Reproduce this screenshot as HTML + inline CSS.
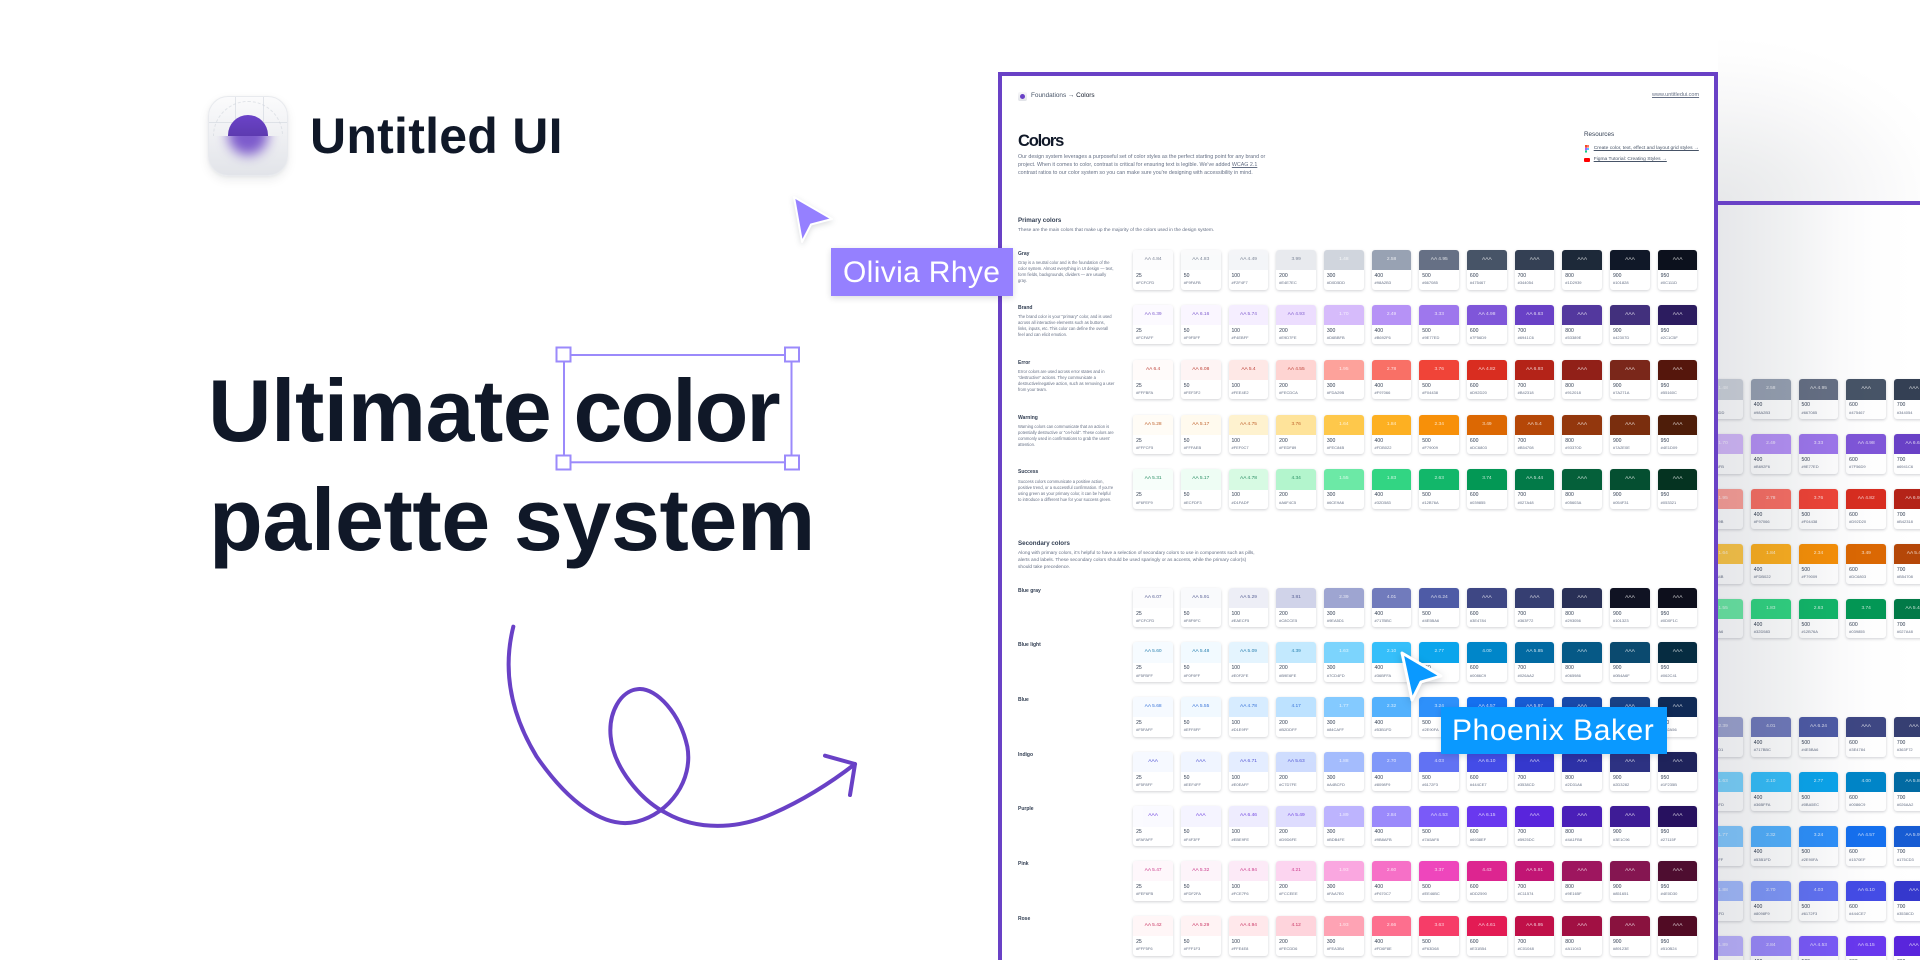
<!DOCTYPE html>
<html lang="en"><head><meta charset="utf-8"><title>Untitled UI – Ultimate color palette system</title>
<style>
html,body{margin:0;padding:0;background:#fff}
body{position:relative;width:1920px;height:960px;overflow:hidden;font-family:"Liberation Sans",sans-serif;color:#101828}
.a{position:absolute;white-space:nowrap;line-height:1}
#p{position:absolute;left:0;top:0;width:1920px;height:960px;filter:blur(.3px)}
.r{position:absolute;display:flex;gap:8.1px}
.r p{position:relative;flex:none;margin:0;width:39.6px;height:39.6px;border-radius:3px;background:#fff;box-shadow:0 1px 3px rgba(16,24,40,.14),0 1px 2px rgba(16,24,40,.06);overflow:hidden}
.r b{display:block;height:20.3px;line-height:20.3px;text-align:center;font-size:4.85px;font-weight:400;color:rgba(255,255,255,.78)}
.r b.l{color:inherit;opacity:.85}
.r u{position:absolute;left:2.8px;top:24.2px;font-size:5.1px;line-height:5px;color:#344054;text-decoration:none}
.r s{position:absolute;left:2.8px;top:31.4px;font-size:4px;line-height:4px;color:#667085;text-decoration:none}
.d{font-size:4.15px;line-height:6px;color:#667085}
.h{font-size:5px;font-weight:700;color:#344054}
.t{color:#344054;font-size:6.2px;font-weight:700}
</style></head><body>

<!-- right-hand background panels -->
<div style="position:absolute;left:1718px;top:30px;width:202px;height:171px;background:radial-gradient(ellipse 240px 165px at 0 100%,#e7e8ea 0%,#eeeff0 30%,#f7f7f8 60%,#fdfdfd 85%,#fff 100%)"></div>
<div id="b" style="position:absolute;left:1718px;top:205px;width:202px;height:755px;overflow:hidden;background:#fff;filter:blur(.3px)">
<div class="r" style="left:-14.7px;top:174.3px"><p><b style="background:#D0D5DD">1.48</b><u>300</u><s>#D0D5DD</s></p><p><b style="background:#98A2B3">2.58</b><u>400</u><s>#98A2B3</s></p><p><b style="background:#667085">AA 4.95</b><u>500</u><s>#667085</s></p><p><b style="background:#475467">AAA</b><u>600</u><s>#475467</s></p><p><b style="background:#344054">AAA</b><u>700</u><s>#344054</s></p></div>
<div class="r" style="left:-14.7px;top:229.1px"><p><b style="background:#D6BBFB">1.70</b><u>300</u><s>#D6BBFB</s></p><p><b style="background:#B692F6">2.49</b><u>400</u><s>#B692F6</s></p><p><b style="background:#9E77ED">3.33</b><u>500</u><s>#9E77ED</s></p><p><b style="background:#7F56D9">AA 4.98</b><u>600</u><s>#7F56D9</s></p><p><b style="background:#6941C6">AA 6.63</b><u>700</u><s>#6941C6</s></p></div>
<div class="r" style="left:-14.7px;top:284px"><p><b style="background:#FDA29B">1.95</b><u>300</u><s>#FDA29B</s></p><p><b style="background:#F97066">2.78</b><u>400</u><s>#F97066</s></p><p><b style="background:#F04438">3.76</b><u>500</u><s>#F04438</s></p><p><b style="background:#D92D20">AA 4.82</b><u>600</u><s>#D92D20</s></p><p><b style="background:#B42318">AA 6.93</b><u>700</u><s>#B42318</s></p></div>
<div class="r" style="left:-14.7px;top:339px"><p><b style="background:#FEC84B">1.64</b><u>300</u><s>#FEC84B</s></p><p><b style="background:#FDB022">1.84</b><u>400</u><s>#FDB022</s></p><p><b style="background:#F79009">2.34</b><u>500</u><s>#F79009</s></p><p><b style="background:#DC6803">3.49</b><u>600</u><s>#DC6803</s></p><p><b style="background:#B54708">AA 5.4</b><u>700</u><s>#B54708</s></p></div>
<div class="r" style="left:-14.7px;top:393.9px"><p><b style="background:#6CE9A6">1.55</b><u>300</u><s>#6CE9A6</s></p><p><b style="background:#32D583">1.83</b><u>400</u><s>#32D583</s></p><p><b style="background:#12B76A">2.63</b><u>500</u><s>#12B76A</s></p><p><b style="background:#039855">3.74</b><u>600</u><s>#039855</s></p><p><b style="background:#027A48">AA 5.44</b><u>700</u><s>#027A48</s></p></div>
<div class="r" style="left:-14.7px;top:512px"><p><b style="background:#9EA5D1">2.39</b><u>300</u><s>#9EA5D1</s></p><p><b style="background:#717BBC">4.01</b><u>400</u><s>#717BBC</s></p><p><b style="background:#4E5BA6">AA 6.24</b><u>500</u><s>#4E5BA6</s></p><p><b style="background:#3E4784">AAA</b><u>600</u><s>#3E4784</s></p><p><b style="background:#363F72">AAA</b><u>700</u><s>#363F72</s></p></div>
<div class="r" style="left:-14.7px;top:566.6px"><p><b style="background:#7CD4FD">1.63</b><u>300</u><s>#7CD4FD</s></p><p><b style="background:#36BFFA">2.10</b><u>400</u><s>#36BFFA</s></p><p><b style="background:#0BA5EC">2.77</b><u>500</u><s>#0BA5EC</s></p><p><b style="background:#0086C9">4.00</b><u>600</u><s>#0086C9</s></p><p><b style="background:#026AA2">AA 5.85</b><u>700</u><s>#026AA2</s></p></div>
<div class="r" style="left:-14.7px;top:621.3px"><p><b style="background:#84CAFF">1.77</b><u>300</u><s>#84CAFF</s></p><p><b style="background:#53B1FD">2.32</b><u>400</u><s>#53B1FD</s></p><p><b style="background:#2E90FA">3.24</b><u>500</u><s>#2E90FA</s></p><p><b style="background:#1570EF">AA 4.57</b><u>600</u><s>#1570EF</s></p><p><b style="background:#175CD3">AA 5.97</b><u>700</u><s>#175CD3</s></p></div>
<div class="r" style="left:-14.7px;top:676px"><p><b style="background:#A4BCFD">1.88</b><u>300</u><s>#A4BCFD</s></p><p><b style="background:#8098F9">2.70</b><u>400</u><s>#8098F9</s></p><p><b style="background:#6172F3">4.03</b><u>500</u><s>#6172F3</s></p><p><b style="background:#444CE7">AA 6.10</b><u>600</u><s>#444CE7</s></p><p><b style="background:#3538CD">AAA</b><u>700</u><s>#3538CD</s></p></div>
<div class="r" style="left:-14.7px;top:730.6px"><p><b style="background:#BDB4FE">1.89</b><u>300</u><s>#BDB4FE</s></p><p><b style="background:#9B8AFB">2.84</b><u>400</u><s>#9B8AFB</s></p><p><b style="background:#7A5AF8">AA 4.53</b><u>500</u><s>#7A5AF8</s></p><p><b style="background:#6938EF">AA 6.15</b><u>600</u><s>#6938EF</s></p><p><b style="background:#5925DC">AAA</b><u>700</u><s>#5925DC</s></p></div>
<div style="position:absolute;inset:0;mix-blend-mode:multiply;background:linear-gradient(90deg,#e6e7ea 0%,#ebecee 18%,#f1f2f3 38%,#f9f9fa 58%,#fefefe 78%,#fff 100%)"></div>
</div>

<!-- page inside the frame -->
<div id="p">
<div style="position:absolute;left:1018px;top:91.5px;width:9px;height:9px;border-radius:2px;background:linear-gradient(#f7f7f9,#e1e3e8)"></div>
<div style="position:absolute;left:1020px;top:93.5px;width:5px;height:5px;border-radius:50%;background:#6941C6"></div>
<div class="a" style="left:1031px;top:92.5px;font-size:6.4px;color:#344054"><span style="color:#475467">Foundations</span> → <span style="color:#101828">Colors</span></div>
<div class="a" style="left:1652px;top:93px;font-size:5.5px;color:#667085;text-decoration:underline">www.untitledui.com</div>

<div class="a" style="left:1018px;top:132.5px;font-size:16.5px;font-weight:700;letter-spacing:-1.2px;color:#101828">Colors</div>
<div class="a" style="left:1018px;top:155.3px;font-size:5.34px;color:#667085">Our design system leverages a purposeful set of color styles as the perfect starting point for any brand or</div>
<div class="a" style="left:1018px;top:163px;font-size:5.34px;color:#667085">project. When it comes to color, contrast is critical for ensuring text is legible. We've added <span style="text-decoration:underline">WCAG 2.1</span></div>
<div class="a" style="left:1018px;top:170.6px;font-size:5.34px;color:#667085">contrast ratios to our color system so you can make sure you're designing with accessibility in mind.</div>

<div class="a" style="left:1584px;top:132.4px;font-size:6.3px;color:#344054">Resources</div>
<svg style="position:absolute;left:1584px;top:145px" width="6" height="8" viewBox="0 0 6 8"><rect x="1" width="2" height="2.6" fill="#F24E1E"/><rect x="3" width="2" height="2.6" fill="#FF7262"/><rect x="1" y="2.7" width="2" height="2.6" fill="#A259FF"/><circle cx="4" cy="4" r="1" fill="#1ABCFE"/><rect x="1" y="5.3" width="2" height="2.4" rx="1" fill="#0ACF83"/></svg>
<div style="position:absolute;left:1583.5px;top:158px;width:6.5px;height:4.4px;border-radius:1px;background:#f00"></div>
<div class="a" style="left:1593.7px;top:146.6px;font-size:4.9px;color:#475467;text-decoration:underline">Create color, text, effect and layout grid styles →</div>
<div class="a" style="left:1593.7px;top:157.6px;font-size:4.9px;color:#475467;text-decoration:underline">Figma Tutorial: Creating Styles →</div>

<div class="a t" style="left:1018px;top:217.6px">Primary colors</div>
<div class="a" style="left:1018px;top:228.6px;font-size:4.8px;color:#667085">These are the main colors that make up the majority of the colors used in the design system.</div>

<!-- Gray -->
<div class="a h" style="left:1018px;top:251.5px">Gray</div>
<div class="a d" style="left:1018px;top:259.7px">Gray is a neutral color and is the foundation of the<br>color system. Almost everything in UI design — text,<br>form fields, backgrounds, dividers — are usually<br>gray.</div>
<div class="r" style="left:1133.3px;top:250px;color:#667085"><p><b class="l" style="background:#FCFCFD">AA 4.84</b><u>25</u><s>#FCFCFD</s></p><p><b class="l" style="background:#F9FAFB">AA 4.83</b><u>50</u><s>#F9FAFB</s></p><p><b class="l" style="background:#F2F4F7">AA 4.49</b><u>100</u><s>#F2F4F7</s></p><p><b class="l" style="background:#E4E7EC">3.99</b><u>200</u><s>#E4E7EC</s></p><p><b style="background:#D0D5DD">1.48</b><u>300</u><s>#D0D5DD</s></p><p><b style="background:#98A2B3">2.58</b><u>400</u><s>#98A2B3</s></p><p><b style="background:#667085">AA 4.95</b><u>500</u><s>#667085</s></p><p><b style="background:#475467">AAA</b><u>600</u><s>#475467</s></p><p><b style="background:#344054">AAA</b><u>700</u><s>#344054</s></p><p><b style="background:#1D2939">AAA</b><u>800</u><s>#1D2939</s></p><p><b style="background:#101828">AAA</b><u>900</u><s>#101828</s></p><p><b style="background:#0C111D">AAA</b><u>950</u><s>#0C111D</s></p></div>

<!-- Brand -->
<div class="a h" style="left:1018px;top:306.2px">Brand</div>
<div class="a d" style="left:1018px;top:314.4px">The brand color is your "primary" color, and is used<br>across all interactive elements such as buttons,<br>links, inputs, etc. This color can define the overall<br>feel and can elicit emotion.</div>
<div class="r" style="left:1133.3px;top:304.8px;color:#6941C6"><p><b class="l" style="background:#FCFAFF">AA 6.39</b><u>25</u><s>#FCFAFF</s></p><p><b class="l" style="background:#F9F5FF">AA 6.16</b><u>50</u><s>#F9F5FF</s></p><p><b class="l" style="background:#F4EBFF">AA 5.74</b><u>100</u><s>#F4EBFF</s></p><p><b class="l" style="background:#E9D7FE">AA 4.93</b><u>200</u><s>#E9D7FE</s></p><p><b style="background:#D6BBFB">1.70</b><u>300</u><s>#D6BBFB</s></p><p><b style="background:#B692F6">2.49</b><u>400</u><s>#B692F6</s></p><p><b style="background:#9E77ED">3.33</b><u>500</u><s>#9E77ED</s></p><p><b style="background:#7F56D9">AA 4.98</b><u>600</u><s>#7F56D9</s></p><p><b style="background:#6941C6">AA 6.63</b><u>700</u><s>#6941C6</s></p><p><b style="background:#53389E">AAA</b><u>800</u><s>#53389E</s></p><p><b style="background:#42307D">AAA</b><u>900</u><s>#42307D</s></p><p><b style="background:#2C1C5F">AAA</b><u>950</u><s>#2C1C5F</s></p></div>

<!-- Error -->
<div class="a h" style="left:1018px;top:361px">Error</div>
<div class="a d" style="left:1018px;top:369.2px">Error colors are used across error states and in<br>"destructive" actions. They communicate a<br>destructive/negative action, such as removing a user<br>from your team.</div>
<div class="r" style="left:1133.3px;top:359.8px;color:#B42318"><p><b class="l" style="background:#FFFBFA">AA 6.4</b><u>25</u><s>#FFFBFA</s></p><p><b class="l" style="background:#FEF3F2">AA 6.08</b><u>50</u><s>#FEF3F2</s></p><p><b class="l" style="background:#FEE4E2">AA 5.4</b><u>100</u><s>#FEE4E2</s></p><p><b class="l" style="background:#FECDCA">AA 4.55</b><u>200</u><s>#FECDCA</s></p><p><b style="background:#FDA29B">1.95</b><u>300</u><s>#FDA29B</s></p><p><b style="background:#F97066">2.78</b><u>400</u><s>#F97066</s></p><p><b style="background:#F04438">3.76</b><u>500</u><s>#F04438</s></p><p><b style="background:#D92D20">AA 4.82</b><u>600</u><s>#D92D20</s></p><p><b style="background:#B42318">AA 6.93</b><u>700</u><s>#B42318</s></p><p><b style="background:#912018">AAA</b><u>800</u><s>#912018</s></p><p><b style="background:#7A271A">AAA</b><u>900</u><s>#7A271A</s></p><p><b style="background:#55160C">AAA</b><u>950</u><s>#55160C</s></p></div>

<!-- Warning -->
<div class="a h" style="left:1018px;top:415.6px">Warning</div>
<div class="a d" style="left:1018px;top:423.8px">Warning colors can communicate that an action is<br>potentially destructive or "on-hold". These colors are<br>commonly used in confirmations to grab the users'<br>attention.</div>
<div class="r" style="left:1133.3px;top:414.5px;color:#B54708"><p><b class="l" style="background:#FFFCF5">AA 5.28</b><u>25</u><s>#FFFCF5</s></p><p><b class="l" style="background:#FFFAEB">AA 5.17</b><u>50</u><s>#FFFAEB</s></p><p><b class="l" style="background:#FEF0C7">AA 4.75</b><u>100</u><s>#FEF0C7</s></p><p><b class="l" style="background:#FEDF89">3.76</b><u>200</u><s>#FEDF89</s></p><p><b style="background:#FEC84B">1.64</b><u>300</u><s>#FEC84B</s></p><p><b style="background:#FDB022">1.84</b><u>400</u><s>#FDB022</s></p><p><b style="background:#F79009">2.34</b><u>500</u><s>#F79009</s></p><p><b style="background:#DC6803">3.49</b><u>600</u><s>#DC6803</s></p><p><b style="background:#B54708">AA 5.4</b><u>700</u><s>#B54708</s></p><p><b style="background:#93370D">AAA</b><u>800</u><s>#93370D</s></p><p><b style="background:#7A2E0E">AAA</b><u>900</u><s>#7A2E0E</s></p><p><b style="background:#4E1D09">AAA</b><u>950</u><s>#4E1D09</s></p></div>

<!-- Success -->
<div class="a h" style="left:1018px;top:470.4px">Success</div>
<div class="a d" style="left:1018px;top:478.6px">Success colors communicate a positive action,<br>positive trend, or a successful confirmation. If you're<br>using green as your primary color, it can be helpful<br>to introduce a different hue for your success green.</div>
<div class="r" style="left:1133.3px;top:469.3px;color:#027A48"><p><b class="l" style="background:#F6FEF9">AA 5.31</b><u>25</u><s>#F6FEF9</s></p><p><b class="l" style="background:#ECFDF3">AA 5.17</b><u>50</u><s>#ECFDF3</s></p><p><b class="l" style="background:#D1FADF">AA 4.78</b><u>100</u><s>#D1FADF</s></p><p><b class="l" style="background:#A6F4C5">4.34</b><u>200</u><s>#A6F4C5</s></p><p><b style="background:#6CE9A6">1.55</b><u>300</u><s>#6CE9A6</s></p><p><b style="background:#32D583">1.83</b><u>400</u><s>#32D583</s></p><p><b style="background:#12B76A">2.63</b><u>500</u><s>#12B76A</s></p><p><b style="background:#039855">3.74</b><u>600</u><s>#039855</s></p><p><b style="background:#027A48">AA 5.44</b><u>700</u><s>#027A48</s></p><p><b style="background:#05603A">AAA</b><u>800</u><s>#05603A</s></p><p><b style="background:#054F31">AAA</b><u>900</u><s>#054F31</s></p><p><b style="background:#053321">AAA</b><u>950</u><s>#053321</s></p></div>

<!-- Secondary -->
<div class="a t" style="left:1018px;top:541.2px">Secondary colors</div>
<div class="a" style="left:1018px;top:552.2px;font-size:4.79px;color:#667085">Along with primary colors, it's helpful to have a selection of secondary colors to use in components such as pills,</div>
<div class="a" style="left:1018px;top:559.2px;font-size:4.79px;color:#667085">alerts and labels. These secondary colors should be used sparingly or as accents, while the primary color(s)</div>
<div class="a" style="left:1018px;top:565.9px;font-size:4.79px;color:#667085">should take precedence.</div>

<div class="a h" style="left:1018px;top:588.5px">Blue gray</div>
<div class="r" style="left:1133.3px;top:587.7px;color:#3E4784"><p><b class="l" style="background:#FCFCFD">AA 6.07</b><u>25</u><s>#FCFCFD</s></p><p><b class="l" style="background:#F8F9FC">AA 5.91</b><u>50</u><s>#F8F9FC</s></p><p><b class="l" style="background:#EAECF5">AA 5.29</b><u>100</u><s>#EAECF5</s></p><p><b class="l" style="background:#C8CCE5">3.81</b><u>200</u><s>#C8CCE5</s></p><p><b style="background:#9EA5D1">2.39</b><u>300</u><s>#9EA5D1</s></p><p><b style="background:#717BBC">4.01</b><u>400</u><s>#717BBC</s></p><p><b style="background:#4E5BA6">AA 6.24</b><u>500</u><s>#4E5BA6</s></p><p><b style="background:#3E4784">AAA</b><u>600</u><s>#3E4784</s></p><p><b style="background:#363F72">AAA</b><u>700</u><s>#363F72</s></p><p><b style="background:#293056">AAA</b><u>800</u><s>#293056</s></p><p><b style="background:#101323">AAA</b><u>900</u><s>#101323</s></p><p><b style="background:#0D0F1C">AAA</b><u>950</u><s>#0D0F1C</s></p></div>

<div class="a h" style="left:1018px;top:643.3px">Blue light</div>
<div class="r" style="left:1133.3px;top:642.3px;color:#026AA2"><p><b class="l" style="background:#F5FBFF">AA 5.60</b><u>25</u><s>#F5FBFF</s></p><p><b class="l" style="background:#F0F9FF">AA 5.48</b><u>50</u><s>#F0F9FF</s></p><p><b class="l" style="background:#E0F2FE">AA 5.09</b><u>100</u><s>#E0F2FE</s></p><p><b class="l" style="background:#B9E6FE">4.39</b><u>200</u><s>#B9E6FE</s></p><p><b style="background:#7CD4FD">1.63</b><u>300</u><s>#7CD4FD</s></p><p><b style="background:#36BFFA">2.10</b><u>400</u><s>#36BFFA</s></p><p><b style="background:#0BA5EC">2.77</b><u>500</u><s>#0BA5EC</s></p><p><b style="background:#0086C9">4.00</b><u>600</u><s>#0086C9</s></p><p><b style="background:#026AA2">AA 5.85</b><u>700</u><s>#026AA2</s></p><p><b style="background:#065986">AAA</b><u>800</u><s>#065986</s></p><p><b style="background:#0B4A6F">AAA</b><u>900</u><s>#0B4A6F</s></p><p><b style="background:#062C41">AAA</b><u>950</u><s>#062C41</s></p></div>

<div class="a h" style="left:1018px;top:698px">Blue</div>
<div class="r" style="left:1133.3px;top:697px;color:#175CD3"><p><b class="l" style="background:#F5FAFF">AA 5.68</b><u>25</u><s>#F5FAFF</s></p><p><b class="l" style="background:#EFF8FF">AA 5.55</b><u>50</u><s>#EFF8FF</s></p><p><b class="l" style="background:#D1E9FF">AA 4.78</b><u>100</u><s>#D1E9FF</s></p><p><b class="l" style="background:#B2DDFF">4.17</b><u>200</u><s>#B2DDFF</s></p><p><b style="background:#84CAFF">1.77</b><u>300</u><s>#84CAFF</s></p><p><b style="background:#53B1FD">2.32</b><u>400</u><s>#53B1FD</s></p><p><b style="background:#2E90FA">3.24</b><u>500</u><s>#2E90FA</s></p><p><b style="background:#1570EF">AA 4.57</b><u>600</u><s>#1570EF</s></p><p><b style="background:#175CD3">AA 5.97</b><u>700</u><s>#175CD3</s></p><p><b style="background:#1849A9">AAA</b><u>800</u><s>#1849A9</s></p><p><b style="background:#194185">AAA</b><u>900</u><s>#194185</s></p><p><b style="background:#102A56">AAA</b><u>950</u><s>#102A56</s></p></div>

<div class="a h" style="left:1018px;top:752.5px">Indigo</div>
<div class="r" style="left:1133.3px;top:751.7px;color:#3538CD"><p><b class="l" style="background:#F5F8FF">AAA</b><u>25</u><s>#F5F8FF</s></p><p><b class="l" style="background:#EEF4FF">AAA</b><u>50</u><s>#EEF4FF</s></p><p><b class="l" style="background:#E0EAFF">AA 6.71</b><u>100</u><s>#E0EAFF</s></p><p><b class="l" style="background:#C7D7FE">AA 5.63</b><u>200</u><s>#C7D7FE</s></p><p><b style="background:#A4BCFD">1.88</b><u>300</u><s>#A4BCFD</s></p><p><b style="background:#8098F9">2.70</b><u>400</u><s>#8098F9</s></p><p><b style="background:#6172F3">4.03</b><u>500</u><s>#6172F3</s></p><p><b style="background:#444CE7">AA 6.10</b><u>600</u><s>#444CE7</s></p><p><b style="background:#3538CD">AAA</b><u>700</u><s>#3538CD</s></p><p><b style="background:#2D31A6">AAA</b><u>800</u><s>#2D31A6</s></p><p><b style="background:#2D3282">AAA</b><u>900</u><s>#2D3282</s></p><p><b style="background:#1F235B">AAA</b><u>950</u><s>#1F235B</s></p></div>

<div class="a h" style="left:1018px;top:807.3px">Purple</div>
<div class="r" style="left:1133.3px;top:806.3px;color:#5925DC"><p><b class="l" style="background:#FAFAFF">AAA</b><u>25</u><s>#FAFAFF</s></p><p><b class="l" style="background:#F4F3FF">AAA</b><u>50</u><s>#F4F3FF</s></p><p><b class="l" style="background:#EBE9FE">AA 6.46</b><u>100</u><s>#EBE9FE</s></p><p><b class="l" style="background:#D9D6FE">AA 5.49</b><u>200</u><s>#D9D6FE</s></p><p><b style="background:#BDB4FE">1.89</b><u>300</u><s>#BDB4FE</s></p><p><b style="background:#9B8AFB">2.84</b><u>400</u><s>#9B8AFB</s></p><p><b style="background:#7A5AF8">AA 4.53</b><u>500</u><s>#7A5AF8</s></p><p><b style="background:#6938EF">AA 6.15</b><u>600</u><s>#6938EF</s></p><p><b style="background:#5925DC">AAA</b><u>700</u><s>#5925DC</s></p><p><b style="background:#4A1FB8">AAA</b><u>800</u><s>#4A1FB8</s></p><p><b style="background:#3E1C96">AAA</b><u>900</u><s>#3E1C96</s></p><p><b style="background:#27115F">AAA</b><u>950</u><s>#27115F</s></p></div>

<div class="a h" style="left:1018px;top:862px">Pink</div>
<div class="r" style="left:1133.3px;top:861px;color:#C11574"><p><b class="l" style="background:#FEF6FB">AA 5.47</b><u>25</u><s>#FEF6FB</s></p><p><b class="l" style="background:#FDF2FA">AA 5.32</b><u>50</u><s>#FDF2FA</s></p><p><b class="l" style="background:#FCE7F6">AA 4.94</b><u>100</u><s>#FCE7F6</s></p><p><b class="l" style="background:#FCCEEE">4.21</b><u>200</u><s>#FCCEEE</s></p><p><b style="background:#FAA7E0">1.93</b><u>300</u><s>#FAA7E0</s></p><p><b style="background:#F670C7">2.60</b><u>400</u><s>#F670C7</s></p><p><b style="background:#EE46BC">3.37</b><u>500</u><s>#EE46BC</s></p><p><b style="background:#DD2590">4.43</b><u>600</u><s>#DD2590</s></p><p><b style="background:#C11574">AA 5.91</b><u>700</u><s>#C11574</s></p><p><b style="background:#9E165F">AAA</b><u>800</u><s>#9E165F</s></p><p><b style="background:#851651">AAA</b><u>900</u><s>#851651</s></p><p><b style="background:#4E0D30">AAA</b><u>950</u><s>#4E0D30</s></p></div>

<div class="a h" style="left:1018px;top:917px">Rose</div>
<div class="r" style="left:1133.3px;top:916px;color:#C01048"><p><b class="l" style="background:#FFF5F6">AA 5.42</b><u>25</u><s>#FFF5F6</s></p><p><b class="l" style="background:#FFF1F3">AA 5.29</b><u>50</u><s>#FFF1F3</s></p><p><b class="l" style="background:#FFE4E8">AA 4.94</b><u>100</u><s>#FFE4E8</s></p><p><b class="l" style="background:#FECDD6">4.12</b><u>200</u><s>#FECDD6</s></p><p><b style="background:#FEA3B4">1.93</b><u>300</u><s>#FEA3B4</s></p><p><b style="background:#FD6F8E">2.66</b><u>400</u><s>#FD6F8E</s></p><p><b style="background:#F63D68">3.63</b><u>500</u><s>#F63D68</s></p><p><b style="background:#E31B54">AA 4.61</b><u>600</u><s>#E31B54</s></p><p><b style="background:#C01048">AA 6.95</b><u>700</u><s>#C01048</s></p><p><b style="background:#A11043">AAA</b><u>800</u><s>#A11043</s></p><p><b style="background:#89123E">AAA</b><u>900</u><s>#89123E</s></p><p><b style="background:#510B24">AAA</b><u>950</u><s>#510B24</s></p></div>
</div>

<!-- frame lines -->
<div style="position:absolute;left:998px;top:72px;width:720px;height:4px;background:#6941C6"></div>
<div style="position:absolute;left:998px;top:72px;width:4px;height:888px;background:#6941C6"></div>
<div style="position:absolute;left:1714px;top:72px;width:4px;height:888px;background:#6941C6"></div>
<div style="position:absolute;left:1718px;top:201px;width:202px;height:4px;background:#6941C6"></div>

<!-- logo -->
<div style="position:absolute;left:208px;top:96px;width:80px;height:80px;box-sizing:border-box;border:1px solid #e8eaee;border-radius:20px;background:linear-gradient(#fbfbfc,#e2e4e9);box-shadow:0 4px 10px rgba(16,24,40,.08),0 1px 3px rgba(16,24,40,.05);overflow:hidden">
<div style="position:absolute;left:25.5px;top:0;width:1px;height:26px;background:rgba(208,213,221,.6)"></div>
<div style="position:absolute;left:53.5px;top:0;width:1px;height:26px;background:rgba(208,213,221,.6)"></div>
<div style="position:absolute;left:0;top:25px;width:78px;height:1px;background:rgba(208,213,221,.6)"></div>
<div style="position:absolute;left:0;top:0;width:78px;height:39px;overflow:hidden"><div style="position:absolute;left:4px;top:4px;width:70px;height:70px;border-radius:50%;border:1px dashed rgba(208,213,221,.6);box-sizing:border-box"></div></div>
<div style="position:absolute;left:0;top:39px;width:78px;height:39px;overflow:hidden"><div style="position:absolute;left:19px;top:-21px;width:40px;height:40px;border-radius:50%;background:rgba(105,65,198,.85);filter:blur(6px)"></div></div>
<div style="position:absolute;left:19px;top:18px;width:40px;height:21px;border-radius:20px 20px 0 0;background:linear-gradient(#6b43c8,#5d3ab0)"></div>
</div>
<div class="a" style="left:310px;top:111px;font-size:50px;font-weight:700;letter-spacing:.25px;color:#101828">Untitled UI</div>

<!-- headline -->
<div class="a" style="left:208px;top:366.5px;font-size:88px;font-weight:700;letter-spacing:-.5px;color:#101828">Ultimate</div>
<div class="a" style="left:573.5px;top:366.5px;font-size:88px;font-weight:700;letter-spacing:-2px;color:#101828">color</div>
<div class="a" style="left:209px;top:476.2px;font-size:88px;font-weight:700;letter-spacing:-.4px;color:#101828">palette system</div>

<!-- selection box -->
<svg style="position:absolute;left:550px;top:340px" width="256" height="136" viewBox="0 0 256 136" fill="#fff" stroke="#9B8AFB" stroke-width="2"><rect x="14" y="15" width="227.5" height="107.3" fill="none"/><rect x="6.5" y="7.5" width="14" height="14"/><rect x="235" y="7.5" width="14" height="14"/><rect x="6.5" y="115.5" width="14" height="14"/><rect x="235" y="115.5" width="14" height="14"/></svg>

<!-- squiggle -->
<svg style="position:absolute;left:480px;top:610px" width="400" height="240" viewBox="0 0 1200 720" fill="none" stroke="#6941C6" stroke-width="12" stroke-linecap="round" stroke-linejoin="round"><path d="M100 50C70 170 85 300 170 440C260 570 370 660 470 635C570 610 640 510 622 410C600 310 530 235 478 237C420 240 385 310 392 380C400 470 480 570 560 610C650 660 770 660 880 610C970 570 1050 520 1125 462"/><path d="M1035 437L1125 462L1110 555"/></svg>

<!-- purple cursor -->
<svg style="position:absolute;left:785px;top:190px;filter:drop-shadow(0 2px 3px rgba(16,24,40,.15))" width="56" height="60" viewBox="785 190 56 60"><path d="M794 197L832 219L811 224.5L802 242Z" fill="#9580FF" stroke="#fff" stroke-width="2" stroke-linejoin="round"/></svg>
<div style="position:absolute;left:831px;top:248px;width:182px;height:48px;background:#9580FF;box-shadow:0 2px 6px rgba(16,24,40,.15)"></div>
<div class="a" style="left:843px;top:258px;font-size:30px;letter-spacing:.35px;color:#fff">Olivia Rhye</div>

<!-- blue cursor -->
<svg style="position:absolute;left:1392px;top:644px;filter:drop-shadow(0 2px 4px rgba(16,24,40,.2))" width="60" height="66" viewBox="1392 644 60 66"><path d="M1402 653L1441 676L1421 682L1412 700Z" fill="#0A99FF" stroke="#fff" stroke-width="3" stroke-linejoin="round"/></svg>
<div style="position:absolute;left:1440.5px;top:706.5px;width:226px;height:47px;background:#0A99FF;box-shadow:0 2px 6px rgba(16,24,40,.15)"></div>
<div class="a" style="left:1452px;top:716px;font-size:30px;letter-spacing:.55px;color:#fff">Phoenix Baker</div>

</body></html>
